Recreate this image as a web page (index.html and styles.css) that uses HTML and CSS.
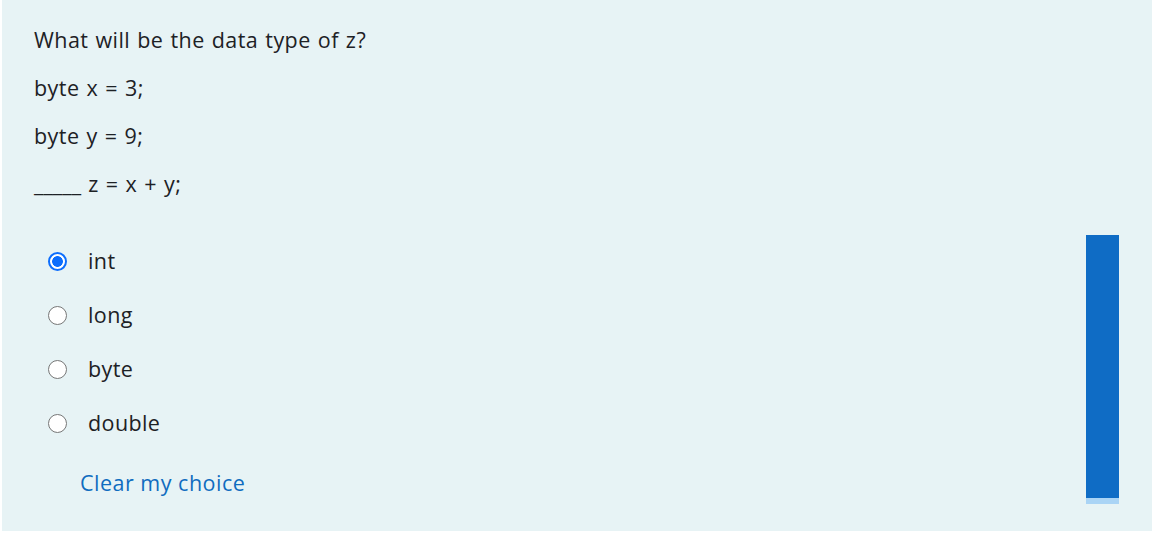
FILE: index.html
```html
<!DOCTYPE html>
<html>
<head>
<meta charset="utf-8" />
<title>Question</title>
<link rel="stylesheet" href="styles.css">
</head>
<body>
<div class="que">
	<div class="formulation">
		<div class="qtext">
			<p>What will be the data type of z?</p>
			<p>byte x = 3;</p>
			<p>byte y = 9;</p>
			<p><span class="blank">_____</span> z = x + y;</p>
		</div>
		<div class="answer">
			<label class="opt"><span class="radio checked"></span><span>int</span></label>
			<label class="opt"><span class="radio"></span><span>long</span></label>
			<label class="opt"><span class="radio"></span><span>byte</span></label>
			<label class="opt"><span class="radio"></span><span>double</span></label>
		</div>
		<a class="clear" href="#">Clear my choice</a>
	</div>
	<div class="bar"></div>
</div>
</body>
</html>
```

FILE: styles.css
```css
body {
	margin: 0;
	background: #fff;
	font-family: "Open Sans", "Noto Sans", sans-serif;
	color: #1d2125;
}
.que {
	display: flex;
	margin-left: 2px;
	width: 1150px;
	height: 531px;
	box-sizing: border-box;
	padding: 25px 33px 0 32px;
	background: #e7f3f5;
}
.formulation {
	flex: 1;
}
.qtext p {
	margin: 0 0 18px 0;
	font-size: 21.5px;
	letter-spacing: 0.45px;
	word-spacing: 1px;
	line-height: 30px;
}
.blank {
	letter-spacing: 0;
}
.answer {
	display: flex;
	flex-direction: column;
	gap: 24px;
	margin-top: 47px;
}
.opt {
	display: flex;
	align-items: center;
	gap: 21px;
	padding-left: 14px;
	font-size: 21.5px;
	letter-spacing: 0.4px;
	line-height: 30px;
}
.radio {
	width: 19px;
	height: 19px;
	box-sizing: border-box;
	border-radius: 50%;
	border: 1.5px solid #777;
	background: #fff;
}
.radio.checked {
	border: 2px solid #0d6efd;
	background: radial-gradient(circle, #0d6efd 0 5px, #fff 5.7px);
}
.clear {
	display: inline-block;
	margin: 30px 0 0 46px;
	font-size: 21.5px;
	letter-spacing: 0.5px;
	line-height: 30px;
	color: #0f6cbf;
	text-decoration: none;
}
.bar {
	width: 33px;
	height: 269px;
	margin-top: 210px;
	background: linear-gradient(#0f6cc5 0 263px, #aad4f5 263px);
}
```
